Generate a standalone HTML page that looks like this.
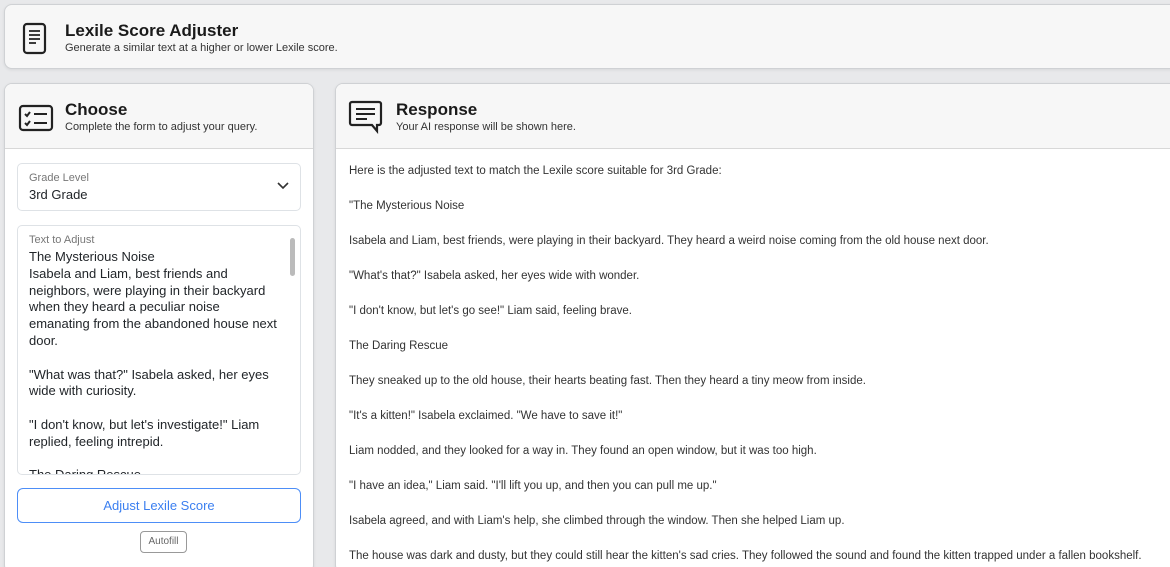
<!DOCTYPE html>
<html style="overflow:hidden;height:567px"><head><meta charset="utf-8"><style>
*{box-sizing:border-box;margin:0;padding:0}
body{width:1170px;height:567px;overflow:hidden;background:#e8e9eb;font-family:"Liberation Sans",sans-serif;color:#212529;position:relative}
.card{position:absolute;background:#fff;border:1px solid #cfd1d4;border-radius:8px;overflow:hidden;box-shadow:0 1px 3px rgba(0,0,0,.08)}
.hdr{background:#f7f7f7;border-bottom:1px solid #d8d8d8;position:relative}
.t{font-weight:bold;font-size:17px;position:absolute;color:#1a1a1a}
.s{font-size:11px;position:absolute;color:#333}
.resp p{position:absolute;left:13px;font-size:11.5px;color:#333;white-space:nowrap}
</style></head><body>
<div class="card" style="left:4px;top:4px;width:1180px;height:65px;background:#f7f7f7">
<svg style="position:absolute;left:17px;top:17px" width="26" height="34" viewBox="0 0 26 34"><rect x="2" y="2" width="21" height="29" rx="3" fill="none" stroke="#222" stroke-width="2.2"/><path d="M7 9h11M7 13h11M7 17h11M7 21h7" stroke="#222" stroke-width="1.8"/></svg>
<div class="t" style="left:60px;top:16px">Lexile Score Adjuster</div>
<div class="s" style="left:60px;top:37px">Generate a similar text at a higher or lower Lexile score.</div>
</div>

<div class="card" style="left:4px;top:83px;width:310px;height:490px">
<div class="hdr" style="height:65px">
<svg style="position:absolute;left:13px;top:20px" width="36" height="28" viewBox="0 0 36 28"><rect x="2" y="2" width="32" height="24" rx="3" fill="none" stroke="#222" stroke-width="2.2"/><path d="M7 10l2 2 3-4M7 19l2 2 3-4M16 10h13M16 19h13" stroke="#222" stroke-width="2" fill="none"/></svg>
<div class="t" style="left:60px;top:16px">Choose</div>
<div class="s" style="left:60px;top:37px">Complete the form to adjust your query.</div>
</div>
<div style="position:absolute;left:12px;top:79px;width:284px;height:48px;border:1px solid #dee2e6;border-radius:5px">
<div style="position:absolute;left:11px;top:8px;font-size:11px;color:#777">Grade Level</div>
<div style="position:absolute;left:11px;top:23px;font-size:13px">3rd Grade</div>
<svg style="position:absolute;left:259px;top:18px" width="12" height="8" viewBox="0 0 12 8"><path d="M1 1l5 5 5-5" stroke="#333" stroke-width="1.6" fill="none"/></svg>
</div>
<div style="position:absolute;left:12px;top:141px;width:284px;height:250px;border:1px solid #dee2e6;border-radius:5px;overflow:hidden">
<div style="position:absolute;left:11px;top:8px;font-size:11px;color:#777">Text to Adjust</div>
<div style="position:absolute;left:11px;top:23px;width:250px;font-size:13px;line-height:16.8px">The Mysterious Noise<br>Isabela and Liam, best friends and neighbors, were playing in their backyard when they heard a peculiar noise emanating from the abandoned house next door.<br><br>"What was that?" Isabela asked, her eyes wide with curiosity.<br><br>"I don't know, but let's investigate!" Liam replied, feeling intrepid.<br><br>The Daring Rescue</div>
<div style="position:absolute;left:272px;top:12px;width:5px;height:38px;background:#bbb;border-radius:3px"></div>
</div>
<div style="position:absolute;left:12px;top:404px;width:284px;height:35px;border:1px solid #4d8ef7;border-radius:6px;text-align:center;line-height:33px;font-size:13px;color:#3b7ff0">Adjust Lexile Score</div>
<div style="position:absolute;left:135px;top:447px;width:47px;height:22px;border:1px solid #999;border-radius:4px;text-align:center;line-height:20px;font-size:10px;color:#666">Autofill</div>
</div>

<div class="card resp" style="left:335px;top:83px;width:850px;height:490px">
<div class="hdr" style="height:65px">
<svg style="position:absolute;left:12px;top:16px" width="36" height="34" viewBox="0 0 36 34"><path d="M4 2h27a2 2 0 0 1 2 2v19a2 2 0 0 1-2 2h-2v6l-5-6H4a2 2 0 0 1-2-2V4a2 2 0 0 1 2-2z" fill="none" stroke="#222" stroke-width="2.2"/><path d="M8 9h19M8 14h19M8 19h11" stroke="#222" stroke-width="2"/></svg>
<div class="t" style="left:60px;top:16px">Response</div>
<div class="s" style="left:60px;top:37px">Your AI response will be shown here.</div>
</div>
<p style="top:81px">Here is the adjusted text to match the Lexile score suitable for 3rd Grade:</p>
<p style="top:116px">"The Mysterious Noise</p>
<p style="top:151px">Isabela and Liam, best friends, were playing in their backyard. They heard a weird noise coming from the old house next door.</p>
<p style="top:186px">"What's that?" Isabela asked, her eyes wide with wonder.</p>
<p style="top:221px">"I don't know, but let's go see!" Liam said, feeling brave.</p>
<p style="top:256px">The Daring Rescue</p>
<p style="top:291px">They sneaked up to the old house, their hearts beating fast. Then they heard a tiny meow from inside.</p>
<p style="top:326px">"It's a kitten!" Isabela exclaimed. "We have to save it!"</p>
<p style="top:361px">Liam nodded, and they looked for a way in. They found an open window, but it was too high.</p>
<p style="top:396px">"I have an idea," Liam said. "I'll lift you up, and then you can pull me up."</p>
<p style="top:431px">Isabela agreed, and with Liam's help, she climbed through the window. Then she helped Liam up.</p>
<p style="top:466px">The house was dark and dusty, but they could still hear the kitten's sad cries. They followed the sound and found the kitten trapped under a fallen bookshelf.</p>
</div>
</body></html>
